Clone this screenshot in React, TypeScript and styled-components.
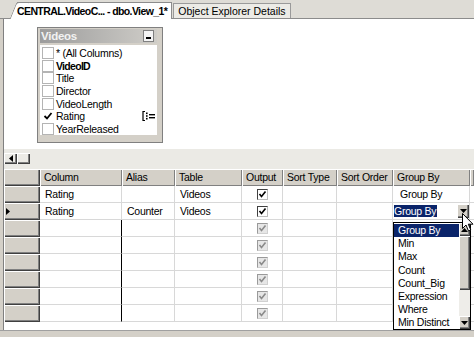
import React from "react";
import styled, { createGlobalStyle, css } from "styled-components";

const GlobalStyle = createGlobalStyle`
  html, body { margin: 0; padding: 0; background: #fff; }
  body {
    font-family: "Liberation Sans", Arial, sans-serif;
    font-size: 10.5px;
    letter-spacing: -0.25px;
    color: #000;
  }
`;

const fields = [
  { name: "* (All Columns)" },
  { name: "VideoID", bold: true },
  { name: "Title" },
  { name: "Director" },
  { name: "VideoLength" },
  { name: "Rating", checked: true, grouped: true },
  { name: "YearReleased" },
];

const columns = [
  { title: "Column", width: 82 },
  { title: "Alias", width: 53 },
  { title: "Table", width: 67 },
  { title: "Output", width: 41 },
  { title: "Sort Type", width: 54 },
  { title: "Sort Order", width: 56 },
  { title: "Group By", width: 77 },
];

type RowData = {
  column?: string;
  alias?: string;
  table?: string;
  output: "on" | "dim";
  groupBy?: string;
  current?: boolean;
  editing?: boolean;
};

const rows: RowData[] = [
  { column: "Rating", table: "Videos", output: "on", groupBy: "Group By" },
  { column: "Rating", alias: "Counter", table: "Videos", output: "on", current: true, editing: true },
  { output: "dim" },
  { output: "dim" },
  { output: "dim" },
  { output: "dim" },
  { output: "dim" },
  { output: "dim" },
];

const aggregates = ["Group By", "Min", "Max", "Count", "Count_Big", "Expression", "Where", "Min Distinct"];

const raised = css`
  background: #d4d0c8;
  box-shadow: inset 1px 1px #fff, inset -1px -1px #404040, inset -2px -2px #808080;
`;

export default function App() {
  return (
    <>
      <GlobalStyle />
      <Window>
        <TabStrip>
          <ActiveTab>CENTRAL.VideoC... - dbo.View_1*</ActiveTab>
          <Tab>Object Explorer Details</Tab>
        </TabStrip>

        <Body>
          <DiagramPane>
            <TableNode>
              <NodeTitle>
                Videos
                <MinButton />
              </NodeTitle>
              <FieldList>
                {fields.map((f) => (
                  <FieldRow key={f.name}>
                    <FieldCheck $checked={f.checked}>
                      {f.checked && (
                        <svg width="10" height="10" viewBox="0 0 10 10">
                          <path d="M1.5 5 L4 7.5 L8.5 2" fill="none" stroke="#000" strokeWidth="1.8" />
                        </svg>
                      )}
                    </FieldCheck>
                    <FieldName $bold={f.bold}>{f.name}</FieldName>
                    {f.grouped && (
                      <GroupIcon width="13" height="10" viewBox="0 0 13 10">
                        <path d="M3 0.5 H1 V9.5 H3" fill="none" stroke="#000" strokeWidth="1.2" />
                        <rect x="4" y="1.5" width="1.6" height="1.6" fill="#000" />
                        <rect x="4" y="4.2" width="1.6" height="1.6" fill="#000" />
                        <rect x="4" y="6.9" width="1.6" height="1.6" fill="#000" />
                        <rect x="7" y="3" width="6" height="1.4" fill="#000" />
                        <rect x="7" y="6" width="6" height="1.4" fill="#000" />
                      </GroupIcon>
                    )}
                  </FieldRow>
                ))}
              </FieldList>
            </TableNode>
          </DiagramPane>

          <HScroll>
            <ScrollButton>
              <svg width="4" height="7" viewBox="0 0 4 7">
                <path d="M4 0 L0 3.5 L4 7 Z" fill="#000" />
              </svg>
            </ScrollButton>
            <ScrollButton />
          </HScroll>

          <Grid>
            <GridRow>
              <RowHeader />
              {columns.map((c) => (
                <HeaderCell key={c.title} $w={c.width}>
                  {c.title}
                </HeaderCell>
              ))}
              <HeaderCell $w={0} $fill />
            </GridRow>

            {rows.map((r, i) => (
              <GridRow key={i}>
                <RowHeader>
                  {r.current && (
                    <svg width="4" height="7" viewBox="0 0 4 7">
                      <path d="M0 0 L4 3.5 L0 7 Z" fill="#000" />
                    </svg>
                  )}
                </RowHeader>
                <Cell $w={82} $dark={i >= 2}>{r.column}</Cell>
                <Cell $w={53}>{r.alias}</Cell>
                <Cell $w={67}>{r.table}</Cell>
                <Cell $w={41} $center>
                  <OutputBox $dim={r.output === "dim"}>
                    <svg width="9" height="9" viewBox="0 0 9 9">
                      <path
                        d="M1.5 4 L3.5 6.5 L7.5 1.5"
                        fill="none"
                        stroke={r.output === "dim" ? "#8a8a8a" : "#000"}
                        strokeWidth="1.6"
                      />
                    </svg>
                  </OutputBox>
                </Cell>
                <Cell $w={54} />
                <Cell $w={56} />
                {r.editing ? (
                  <EditorCell $w={77}>
                    <Selected>Group By</Selected>
                    <DropButton>
                      <svg width="7" height="4" viewBox="0 0 7 4">
                        <path d="M0 0 H7 L3.5 4 Z" fill="#000" />
                      </svg>
                    </DropButton>
                  </EditorCell>
                ) : (
                  <Cell $w={77} $indent>{r.groupBy}</Cell>
                )}
                <Cell $w={0} $fill />
              </GridRow>
            ))}

            <DropList>
              <ListItems>
                {aggregates.map((a, i) => (
                  <ListItem key={a} $selected={i === 0}>
                    {a}
                  </ListItem>
                ))}
              </ListItems>
              <ListScroll>
                <ArrowButton>
                  <svg width="7" height="4" viewBox="0 0 7 4">
                    <path d="M0 4 H7 L3.5 0 Z" fill="#000" />
                  </svg>
                </ArrowButton>
                <Thumb />
                <Track />
                <ArrowButton>
                  <svg width="7" height="4" viewBox="0 0 7 4">
                    <path d="M0 0 H7 L3.5 4 Z" fill="#000" />
                  </svg>
                </ArrowButton>
              </ListScroll>
            </DropList>

            <Cursor width="12" height="19" viewBox="0 0 12 19">
              <path
                d="M0.5 0.5 V15.5 L4 12 L6.5 18 L8.8 17 L6.3 11.2 H11 Z"
                fill="#fff"
                stroke="#000"
                strokeWidth="1"
                strokeLinejoin="round"
              />
            </Cursor>
          </Grid>
          <Filler />
        </Body>
        <BottomBar />
      </Window>
    </>
  );
}

const Window = styled.div`
  width: 474px;
  height: 337px;
  display: flex;
  flex-direction: column;
  background: #d4d0c8;
  overflow: hidden;
`;

const TabStrip = styled.div`
  height: 19px;
  flex: none;
  display: flex;
  align-items: flex-end;
  padding-left: 17px;
  box-sizing: border-box;
  background: #dedcd6;
  border-bottom: 1px solid #8c8c8c;
`;

const ActiveTab = styled.div`
  position: relative;
  z-index: 2;
  height: 16px;
  margin-bottom: -1px;
  padding: 0 4px 0 0;
  line-height: 16px;
  background: #fff;
  border-top: 1px solid #8c8c8c;
  border-right: 1px solid #8c8c8c;
  font-weight: bold;
  letter-spacing: -0.6px;
  white-space: nowrap;

  &::before {
    content: "";
    position: absolute;
    left: -4px;
    top: -1px;
    bottom: 0;
    width: 12px;
    background: #fff;
    border-left: 1px solid #8c8c8c;
    border-top: 1px solid #8c8c8c;
    border-top-left-radius: 3px;
    transform: skewX(-22deg);
    z-index: -1;
  }
`;

const Tab = styled.div`
  height: 14px;
  margin-left: 1px;
  padding: 0 4px;
  line-height: 14px;
  background: #ecebe6;
  border: 1px solid #9a9a9a;
  border-bottom: none;
  letter-spacing: 0;
  white-space: nowrap;
`;

const Body = styled.div`
  flex: 1;
  display: flex;
  flex-direction: column;
  margin-left: 3px;
  background: #fff;
  border-left: 1px solid #808080;
  position: relative;
`;

const DiagramPane = styled.div`
  height: 130px;
  flex: none;
  box-sizing: border-box;
  padding: 8px 0 0 33px;
  background: #fff;
`;

const TableNode = styled.div`
  width: 126px;
  height: 116px;
  box-sizing: border-box;
  border: 1px solid #808080;
  background: #d4d0c8;
  padding: 1px 5px 7px 2px;
  display: flex;
  flex-direction: column;
`;

const NodeTitle = styled.div`
  height: 14px;
  flex: none;
  display: flex;
  align-items: center;
  justify-content: space-between;
  padding: 0 3px 0 1px;
  background: linear-gradient(to right, #9c9c9c, #cfcdc8);
  color: #f2f2f2;
  font-size: 11.5px;
  font-weight: bold;
`;

const MinButton = styled.div`
  width: 9px;
  height: 10px;
  background: #f4f4f4;
  border: 1px solid #808080;
  position: relative;

  &::after {
    content: "";
    position: absolute;
    left: 2px;
    right: 2px;
    bottom: 2px;
    height: 2px;
    background: #000;
  }
`;

const FieldList = styled.div`
  flex: 1;
  margin-top: 2px;
  padding: 2px 0 0 2px;
  background: #fff;
`;

const FieldRow = styled.div`
  height: 12.6px;
  display: flex;
  align-items: center;
`;

const FieldCheck = styled.div<{ $checked?: boolean }>`
  width: 12px;
  height: 12px;
  box-sizing: border-box;
  border: 1px solid ${(p) => (p.$checked ? "transparent" : "#b4b4b4")};
  display: flex;
  align-items: center;
  justify-content: center;
  margin-right: 2px;
`;

const FieldName = styled.span<{ $bold?: boolean }>`
  font-weight: ${(p) => (p.$bold ? "bold" : "normal")};
  letter-spacing: ${(p) => (p.$bold ? "-0.7px" : "-0.25px")};
  white-space: nowrap;
`;

const GroupIcon = styled.svg`
  margin-left: auto;
  margin-right: 2px;
`;

const HScroll = styled.div`
  height: 20px;
  flex: none;
  box-sizing: border-box;
  padding-top: 4px;
  display: flex;
  align-items: flex-start;
  background: #ebeae5;
`;

const ScrollButton = styled.div`
  ${raised};
  background: #ecebe6;
  width: 13px;
  height: 11px;
  display: flex;
  align-items: center;
  justify-content: center;
`;

const Grid = styled.div`
  position: relative;
  display: flex;
  flex-direction: column;
  flex: none;
`;

const GridRow = styled.div`
  height: 17px;
  display: flex;
`;

const RowHeader = styled.div`
  ${raised};
  width: 36px;
  flex: none;
  display: flex;
  align-items: center;
  padding-left: 2px;
  box-sizing: border-box;
`;

const HeaderCell = styled.div<{ $w: number; $fill?: boolean }>`
  width: ${(p) => p.$w}px;
  flex: ${(p) => (p.$fill ? 1 : "none")};
  box-sizing: border-box;
  padding-left: 4px;
  line-height: 17px;
  background: #d4d0c8;
  box-shadow: inset 1px 1px #fff, inset -1px -1px #808080;
  white-space: nowrap;
  overflow: hidden;
`;

const Cell = styled.div<{ $w: number; $fill?: boolean; $dark?: boolean; $center?: boolean; $indent?: boolean }>`
  width: ${(p) => p.$w}px;
  flex: ${(p) => (p.$fill ? 1 : "none")};
  box-sizing: border-box;
  padding-left: ${(p) => (p.$indent ? 7 : 5)}px;
  line-height: 16px;
  border-right: 1px solid ${(p) => (p.$dark ? "#000" : "#d8d8d8")};
  border-bottom: 1px solid #d8d8d8;
  white-space: nowrap;
  ${(p) =>
    p.$center &&
    css`
      display: flex;
      align-items: center;
      justify-content: center;
      padding-left: 0;
    `}
`;

const OutputBox = styled.div<{ $dim?: boolean }>`
  width: 11px;
  height: 11px;
  box-sizing: border-box;
  display: flex;
  align-items: center;
  justify-content: center;
  background: ${(p) => (p.$dim ? "#e6e6e6" : "#fff")};
  border: 1px solid ${(p) => (p.$dim ? "#9a9a9a" : "#404040")};
  border-right-color: ${(p) => (p.$dim ? "#d0d0d0" : "#bdbdbd")};
  border-bottom-color: ${(p) => (p.$dim ? "#d0d0d0" : "#bdbdbd")};
`;

const EditorCell = styled.div<{ $w: number }>`
  width: ${(p) => p.$w}px;
  flex: none;
  box-sizing: border-box;
  display: flex;
  align-items: center;
  padding-left: 1px;
  border-right: 1px solid #d8d8d8;
  border-bottom: 1px solid #d8d8d8;
`;

const Selected = styled.span`
  background: #0a246a;
  color: #fff;
  line-height: 12px;
  padding: 0 1px 0 0;
`;

const DropButton = styled.div`
  ${raised};
  margin-left: auto;
  width: 12px;
  height: 14px;
  display: flex;
  align-items: center;
  justify-content: center;
`;

const DropList = styled.div`
  position: absolute;
  left: 389px;
  top: 53px;
  width: 78px;
  height: 108px;
  box-sizing: border-box;
  border: 1px solid #000;
  background: #fff;
  display: flex;
  z-index: 5;
`;

const ListItems = styled.div`
  flex: 1;
  padding-top: 1px;
`;

const ListItem = styled.div<{ $selected?: boolean }>`
  height: 13.2px;
  line-height: 13px;
  padding-left: 4px;
  white-space: nowrap;
  background: ${(p) => (p.$selected ? "#0a246a" : "transparent")};
  color: ${(p) => (p.$selected ? "#fff" : "#000")};
`;

const ListScroll = styled.div`
  width: 11px;
  display: flex;
  flex-direction: column;
  background: #eeede9;
`;

const ArrowButton = styled.div`
  ${raised};
  height: 13px;
  flex: none;
  display: flex;
  align-items: center;
  justify-content: center;
`;

const Thumb = styled.div`
  ${raised};
  height: 54px;
  flex: none;
`;

const Track = styled.div`
  flex: 1;
`;

const Cursor = styled.svg`
  position: absolute;
  left: 458px;
  top: 44px;
  z-index: 6;
`;

const Filler = styled.div`
  flex: 1;
  background: #fff;
`;

const BottomBar = styled.div`
  height: 7px;
  flex: none;
  background: #d4d0c8;
  border-top: 1px solid #a0a0a0;
  box-sizing: border-box;
`;
